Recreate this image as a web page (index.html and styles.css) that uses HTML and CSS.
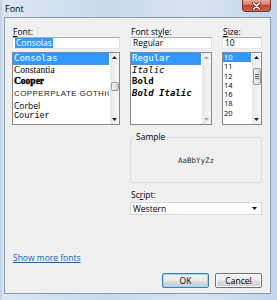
FILE: index.html
```html
<!DOCTYPE html>
<html>
<head>
	<meta charset="utf-8">
	<title>Font</title>
	<link rel="stylesheet" href="styles.css">
</head>
<body>
	<div class="window">
		<div class="titlebar">
			<span class="title">Font</span>
			<span class="close">
				<svg width="11" height="8" viewBox="0 0 11 8">
					<path d="M2.5 1 L8.5 7 M8.5 1 L2.5 7" stroke="#5a1f14" stroke-width="3" stroke-linecap="round"/>
					<path d="M2.5 1 L8.5 7 M8.5 1 L2.5 7" stroke="#ffffff" stroke-width="1.6" stroke-linecap="round"/>
				</svg>
			</span>
		</div>
		<div class="client">
			<div class="pickers">
				<div class="lbl"><u>F</u>ont:</div>
				<div class="lbl">Font st<u>y</u>le:</div>
				<div class="lbl"><u>S</u>ize:</div>

				<div class="field"><span class="hl">Consolas</span></div>
				<div class="field">Regular</div>
				<div class="field">10</div>

				<div class="list">
					<ul class="items">
						<li class="on f-consolas">Consolas</li>
						<li class="f-constantia">Constantia</li>
						<li class="f-cooper">Cooper</li>
						<li class="f-copper">COPPERPLATE GOTHIC</li>
						<li class="f-corbel">Corbel</li>
						<li class="f-courier">Courier</li>
					</ul>
					<div class="vscroll">
						<span class="arr"><svg width="5" height="3" viewBox="0 0 5 3"><path d="M0 3 L2.5 0 L5 3 Z" fill="#222"/></svg></span>
						<span class="track"><span class="thumb thumb-fonts"></span></span>
						<span class="arr"><svg width="5" height="3" viewBox="0 0 5 3"><path d="M0 0 L2.5 3 L5 0 Z" fill="#222"/></svg></span>
					</div>
				</div>

				<div class="list">
					<ul class="items styles">
						<li class="on">Regular</li>
						<li class="s-italic">Italic</li>
						<li class="s-bold">Bold</li>
						<li class="s-bolditalic">Bold Italic</li>
					</ul>
					<div class="vscroll off">
						<span class="arr"><svg width="5" height="3" viewBox="0 0 5 3"><path d="M0 3 L2.5 0 L5 3 Z" fill="#a8a8a8"/></svg></span>
						<span class="track"></span>
						<span class="arr"><svg width="5" height="3" viewBox="0 0 5 3"><path d="M0 0 L2.5 3 L5 0 Z" fill="#a8a8a8"/></svg></span>
					</div>
				</div>

				<div class="list">
					<ul class="items sizes">
						<li class="on">10</li>
						<li>11</li>
						<li>12</li>
						<li>14</li>
						<li>16</li>
						<li>18</li>
						<li>20</li>
					</ul>
					<div class="vscroll">
						<span class="arr"><svg width="5" height="3" viewBox="0 0 5 3"><path d="M0 3 L2.5 0 L5 3 Z" fill="#222"/></svg></span>
						<span class="track"><span class="thumb thumb-sizes"><i></i><i></i><i></i></span></span>
						<span class="arr"><svg width="5" height="3" viewBox="0 0 5 3"><path d="M0 0 L2.5 3 L5 0 Z" fill="#222"/></svg></span>
					</div>
				</div>

				<fieldset class="sample">
					<legend>Sample</legend>
					<div class="sample-text">AaBbYyZz</div>
				</fieldset>

				<div class="lbl script-lbl">Sc<u>r</u>ipt:</div>
				<div class="combo">
					<span>Western</span>
					<svg width="5" height="3" viewBox="0 0 5 3"><path d="M0 0 L2.5 3 L5 0 Z" fill="#111"/></svg>
				</div>
			</div>

			<a class="more" href="#">Show more fonts</a>

			<div class="buttons">
				<button class="btn default">OK</button>
				<button class="btn">Cancel</button>
			</div>
		</div>
	</div>
</body>
</html>
```

FILE: styles.css
```css
* {
	box-sizing: border-box;
}
body {
	margin: 0;
	background: #8fa3bb;
	font-family: "Open Sans", "Noto Sans", sans-serif;
	font-size: 8.5px;
	color: #000;
}
.window {
	width: 277px;
	height: 300px;
	padding: 0 6px 6px 4px;
	background: linear-gradient(90deg, #b9cde6 0px, #dbe6f2 3px, #c9d9ec 40%, #d8e3f0 70%, #c3d5ea 100%);
	display: flex;
	flex-direction: column;
}
.titlebar {
	height: 17px;
	display: flex;
	justify-content: space-between;
	align-items: flex-start;
}
.title {
	padding: 3px 0 0 1px;
	font-size: 9px;
	line-height: 12px;
}
.close {
	width: 29px;
	height: 12px;
	border: 1px solid #7a3225;
	border-top: none;
	border-radius: 0 0 4px 4px;
	background: linear-gradient(#e9a99b 0%, #d47a66 45%, #c2442c 50%, #d8654b 100%);
	display: flex;
	align-items: center;
	justify-content: center;
}
.client {
	flex: 1;
	background: #f0f0f0;
	border: 1px solid #8999ae;
	padding: 9px 7px 5px 7px;
	display: flex;
	flex-direction: column;
}
.pickers {
	display: grid;
	grid-template-columns: 108px 82px 40px;
	column-gap: 10px;
}
.lbl {
	height: 10px;
	line-height: 10px;
	padding-left: 1px;
}
.field {
	height: 12px;
	border: 1px solid #abadb3;
	border-color: #abadb3 #dbdfe6 #e3e9ef #e2e3ea;
	background: #fff;
	padding: 0 2px;
	line-height: 10px;
	white-space: nowrap;
}
.hl {
	display: inline-block;
	background: #3399ff;
	color: #fff;
	padding: 0 1px;
}
.list {
	margin-top: 3px;
	height: 73px;
	border: 1px solid #828790;
	background: #fff;
	display: flex;
	overflow: hidden;
}
.items {
	flex: 1;
	margin: 0;
	padding: 0;
	list-style: none;
	overflow: hidden;
	min-width: 0;
}
.items li {
	height: 11.7px;
	line-height: 11.7px;
	padding-left: 1px;
	white-space: nowrap;
	overflow: hidden;
}
.items li.on {
	background: #3399ff;
	color: #fff;
}
.f-consolas {
	font-family: "DejaVu Sans Mono", monospace;
	font-size: 9px;
}
.f-constantia {
	font-family: "Liberation Serif", serif;
	font-size: 9.5px;
}
.f-cooper {
	font-family: "Liberation Serif", serif;
	font-size: 9.5px;
	font-weight: bold;
	-webkit-text-stroke: 0.4px #000;
}
.f-copper {
	font-family: "Liberation Sans", sans-serif;
	font-size: 8px;
	letter-spacing: 0.4px;
	color: #222;
}
.f-corbel {
	font-family: "Open Sans", sans-serif;
	font-size: 8.5px;
}
.f-courier {
	font-family: "Liberation Mono", monospace;
	font-size: 8.5px;
}
.styles li {
	font-family: "DejaVu Sans Mono", monospace;
	font-size: 9px;
}
.s-italic {
	font-style: italic;
}
.s-bold {
	font-weight: bold;
}
.s-bolditalic {
	font-weight: bold;
	font-style: italic;
}
.sizes li {
	height: 9.3px;
	line-height: 9.3px;
	font-size: 7.5px;
}
.vscroll {
	width: 9px;
	margin-left: 1px;
	display: flex;
	flex-direction: column;
	background: linear-gradient(90deg, #e8e8e8, #f6f6f6);
}
.arr {
	height: 9px;
	display: flex;
	align-items: center;
	justify-content: center;
}
.track {
	flex: 1;
	display: flex;
	flex-direction: column;
}
.thumb {
	margin: 0 0.5px;
	border: 1px solid #9a9a9a;
	border-radius: 2px;
	background: linear-gradient(90deg, #f3f3f3, #e2e2e2 50%, #d6d6d6);
	display: flex;
	flex-direction: column;
	align-items: center;
	justify-content: center;
	gap: 1px;
}
.thumb i {
	display: block;
	width: 4px;
	height: 1px;
	background: #666;
}
.thumb-fonts {
	margin-top: 20px;
	height: 9px;
}
.thumb-sizes {
	margin-top: 6px;
	height: 17px;
}
.sample {
	grid-column: 2 / 4;
	margin: 7px 0 0 0;
	height: 51px;
	padding: 0;
	border: 1px solid #d5dfe5;
	border-radius: 3px;
	min-width: 0;
}
.sample legend {
	margin-left: 3px;
	padding: 0 2px;
	line-height: 10px;
}
.sample-text {
	height: 36px;
	display: flex;
	align-items: center;
	justify-content: center;
	font-family: "DejaVu Sans Mono", monospace;
	font-size: 7.5px;
	color: #333;
}
.script-lbl {
	grid-column: 2 / 4;
	margin-top: 7px;
}
.combo {
	grid-column: 2 / 4;
	margin-top: 2px;
	height: 13px;
	border: 1px solid #d9d9d9;
	background: #fff;
	padding: 0 4px 0 2px;
	display: flex;
	align-items: center;
	justify-content: space-between;
}
.more {
	margin-top: 38px;
	padding-left: 1px;
	line-height: 10px;
	color: #0066cc;
	text-decoration: underline;
	align-self: flex-start;
}
.buttons {
	margin-top: 10px;
	display: flex;
	justify-content: flex-end;
	gap: 6px;
	padding-right: 1px;
}
.btn {
	width: 47px;
	height: 15px;
	padding: 0;
	font-family: "Open Sans", "Noto Sans", sans-serif;
	font-size: 8.5px;
	color: #000;
	border: 1px solid #707070;
	border-radius: 2px;
	background: linear-gradient(#f2f2f2 0%, #ebebeb 50%, #dddddd 51%, #cfcfcf 100%);
	box-shadow: inset 0 0 0 1px #fcfcfc;
}
.btn.default {
	border-color: #3c7fb1;
	box-shadow: inset 0 0 0 1px #9ed6f7;
}
```
